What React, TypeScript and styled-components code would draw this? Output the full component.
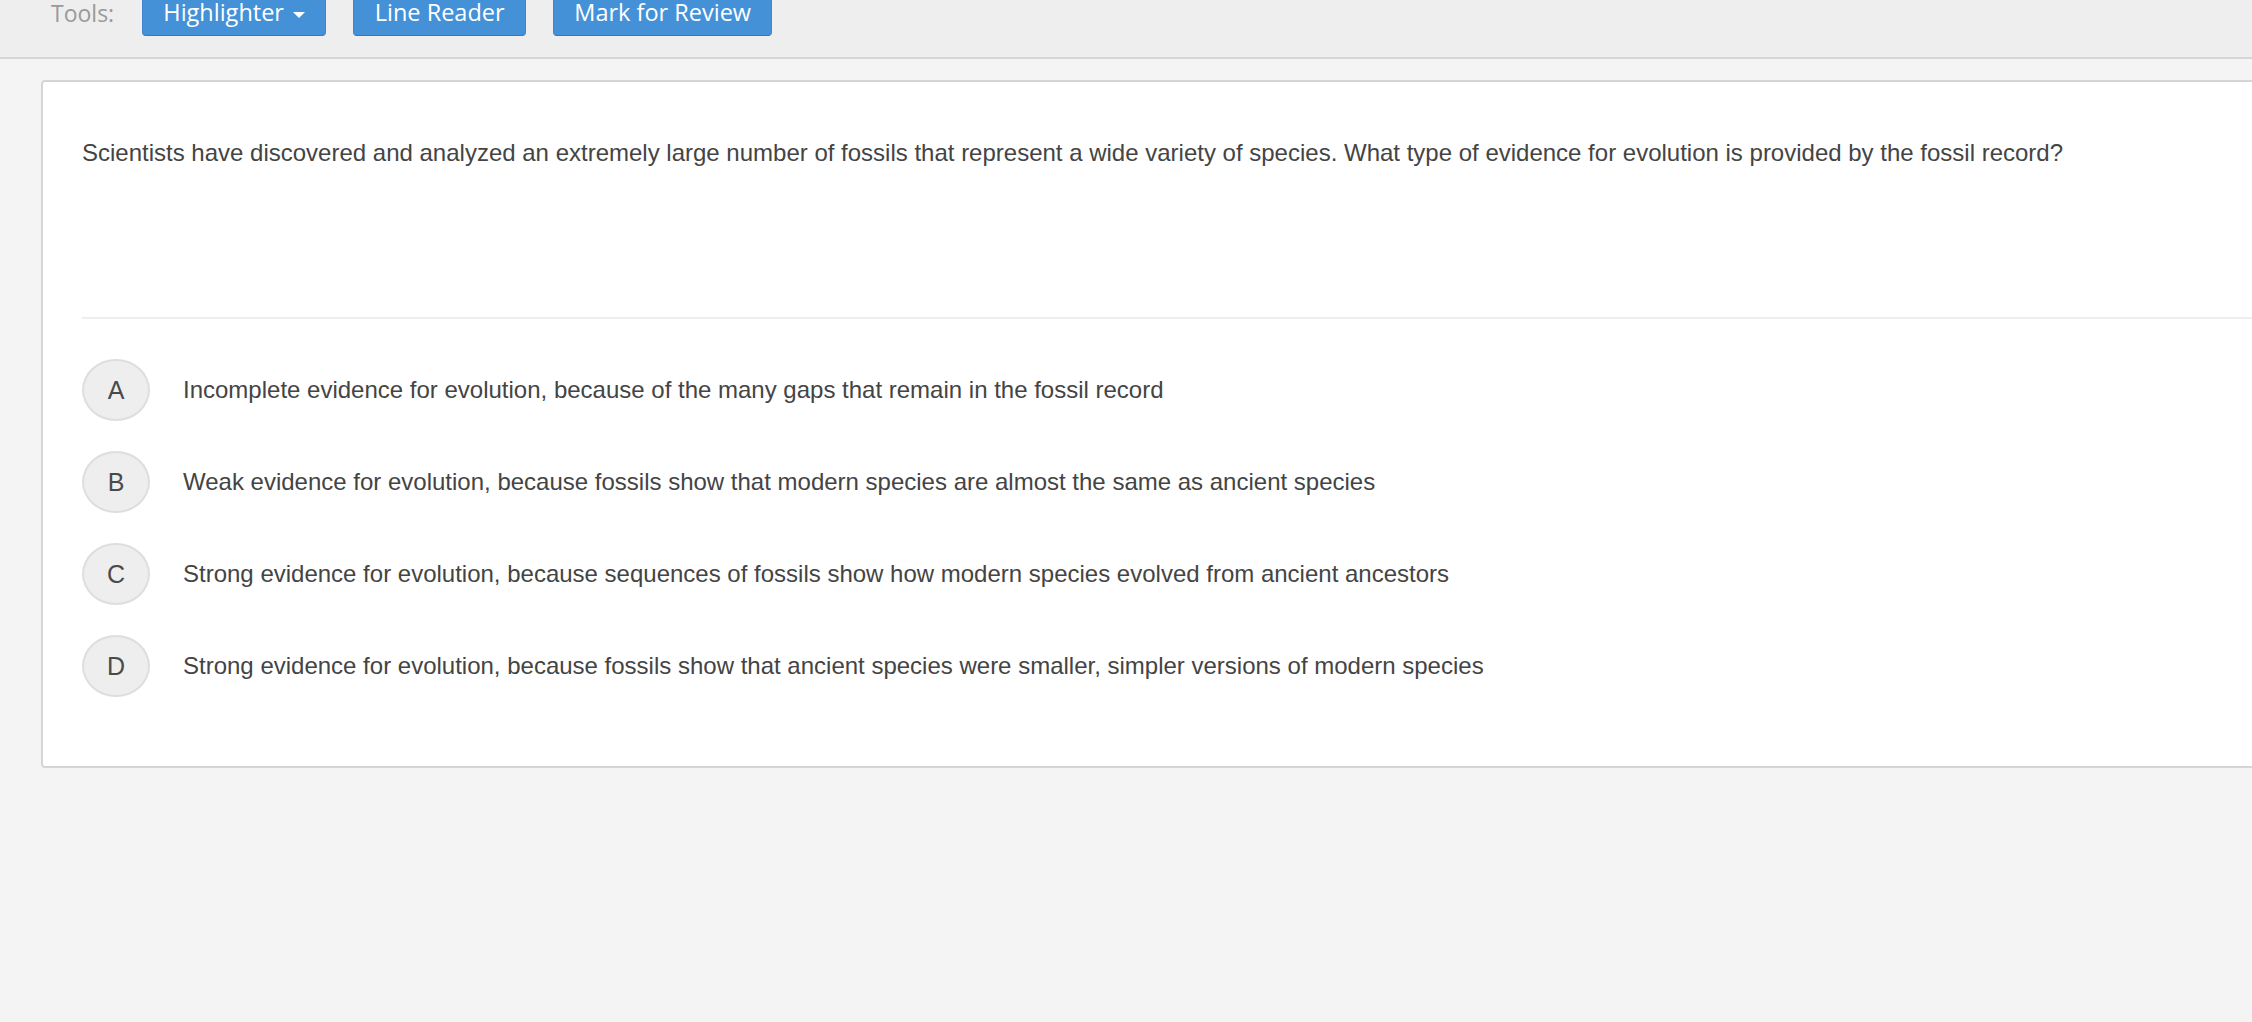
import React from 'react';
import styled, { createGlobalStyle } from 'styled-components';

const GlobalStyle = createGlobalStyle`
  html, body {
    margin: 0;
    padding: 0;
    background: #f4f4f4;
  }
  body {
    font-family: "Liberation Sans", Arial, sans-serif;
    overflow: hidden;
  }
`;

const Page = styled.div`
  width: 2252px;
  height: 1022px;
  overflow: hidden;
  background: #f4f4f4;
`;

const ToolBar = styled.header`
  margin-top: -10px;
  height: 67px;
  border-bottom: 2px solid #d6d6d6;
  background: #eeeeee;
  display: flex;
  align-items: flex-start;
  gap: 27px;
  padding-left: 51px;
  font-family: "Open Sans", sans-serif;
`;

const ToolsLabel = styled.span`
  color: #9a9a9a;
  font-size: 23px;
  line-height: 30px;
  margin-top: 8px;
  margin-right: 1px;
`;

const ToolButton = styled.button<{ $width: number }>`
  width: ${({ $width }) => $width}px;
  height: 46px;
  display: flex;
  align-items: center;
  justify-content: center;
  gap: 9px;
  padding: 0;
  background: #4591d8;
  border: 1px solid #3e86d0;
  border-bottom-color: #3478c6;
  border-radius: 4px;
  color: #ffffff;
  font-family: "Open Sans", sans-serif;
  font-size: 23.5px;
  line-height: 1;
  cursor: pointer;
`;

const Caret = styled.span`
  display: inline-block;
  width: 0;
  height: 0;
  margin-top: 4px;
  border-left: 6.5px solid transparent;
  border-right: 6.5px solid transparent;
  border-top: 6.5px solid #ffffff;
`;

const Card = styled.section`
  margin: 21px 0 0 41px;
  width: 2300px;
  height: 688px;
  box-sizing: border-box;
  background: #ffffff;
  border: 2px solid #d5d5d5;
  border-radius: 4px;
  padding: 55px 0 0 39px;
`;

const Question = styled.p`
  margin: 0;
  padding-bottom: 148px;
  font-size: 24px;
  line-height: 32px;
  color: #444444;
  border-bottom: 2px solid #eeeeee;
`;

const Options = styled.ol`
  list-style: none;
  margin: 0;
  padding: 40px 0 0;
  display: flex;
  flex-direction: column;
  gap: 30px;
`;

const Option = styled.li`
  display: flex;
  align-items: center;
  gap: 33px;
`;

const Letter = styled.span`
  flex: none;
  width: 68px;
  height: 62px;
  box-sizing: border-box;
  border: 2px solid #dedede;
  border-radius: 50%;
  background: #eeeeee;
  display: flex;
  align-items: center;
  justify-content: center;
  font-family: "Liberation Sans", Arial, sans-serif;
  font-size: 25px;
  color: #4a4a4a;
`;

const OptionText = styled.span`
  font-size: 24px;
  line-height: 32px;
  color: #444444;
`;

const options = [
  { key: 'A', text: 'Incomplete evidence for evolution, because of the many gaps that remain in the fossil record' },
  { key: 'B', text: 'Weak evidence for evolution, because fossils show that modern species are almost the same as ancient species' },
  { key: 'C', text: 'Strong evidence for evolution, because sequences of fossils show how modern species evolved from ancient ancestors' },
  { key: 'D', text: 'Strong evidence for evolution, because fossils show that ancient species were smaller, simpler versions of modern species' },
];

export default function App() {
  return (
    <Page>
      <GlobalStyle />
      <ToolBar>
        <ToolsLabel>Tools:</ToolsLabel>
        <ToolButton $width={184}>
          Highlighter <Caret />
        </ToolButton>
        <ToolButton $width={173}>Line Reader</ToolButton>
        <ToolButton $width={219}>Mark for Review</ToolButton>
      </ToolBar>

      <Card>
        <Question>
          Scientists have discovered and analyzed an extremely large number of fossils that represent a wide variety of
          species. What type of evidence for evolution is provided by the fossil record?
        </Question>
        <Options>
          {options.map((o) => (
            <Option key={o.key}>
              <Letter>{o.key}</Letter>
              <OptionText>{o.text}</OptionText>
            </Option>
          ))}
        </Options>
      </Card>
    </Page>
  );
}
